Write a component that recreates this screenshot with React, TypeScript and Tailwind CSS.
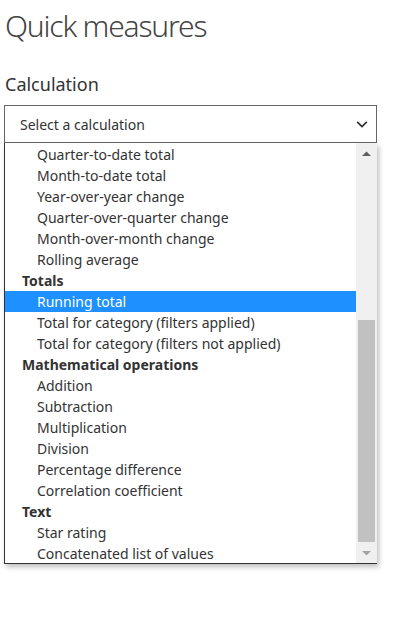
import React from 'react'

type Row = { label: string; header?: boolean; selected?: boolean }

const rows: Row[] = [
  { label: 'Quarter-to-date total' },
  { label: 'Month-to-date total' },
  { label: 'Year-over-year change' },
  { label: 'Quarter-over-quarter change' },
  { label: 'Month-over-month change' },
  { label: 'Rolling average' },
  { label: 'Totals', header: true },
  { label: 'Running total', selected: true },
  { label: 'Total for category (filters applied)' },
  { label: 'Total for category (filters not applied)' },
  { label: 'Mathematical operations', header: true },
  { label: 'Addition' },
  { label: 'Subtraction' },
  { label: 'Multiplication' },
  { label: 'Division' },
  { label: 'Percentage difference' },
  { label: 'Correlation coefficient' },
  { label: 'Text', header: true },
  { label: 'Star rating' },
  { label: 'Concatenated list of values' },
]

export default function App() {
  return (
    <div
      className="w-[400px] h-[629px] bg-white text-[#333333] overflow-hidden"
      style={{ fontFamily: '"Segoe UI", "Noto Sans", sans-serif' }}
    >
      <div className="pl-[5px] pt-[6px]">
        <h1
          className="text-[30px] font-light leading-[40px] tracking-[-1.2px] text-[#444444]"
          style={{ fontFamily: '"Segoe UI Light", "Noto Sans", sans-serif' }}
        >
          Quick measures
        </h1>
        <div className="mt-[26px] text-[18px] leading-[24px]">Calculation</div>
      </div>

      <div className="ml-[4px] mt-[9px] w-[373px]">
        {/* 选择框 */}
        <div className="h-[38px] border border-[#666666] flex items-center pl-[15px] pr-[7px]">
          <span className="flex-1 text-[14px]">Select a calculation</span>
          <svg className="w-[14px] h-[14px]" viewBox="0 0 16 16" fill="none" stroke="#333333" strokeWidth={2}>
            <path d="M2.5 5.5 8 11l5.5-5.5" />
          </svg>
        </div>

        {/* 下拉列表 */}
        <div className="flex h-[421px] border-l border-b border-[#333333] shadow-[2px_3px_5px_rgba(0,0,0,0.25)]">
          <div className="flex-1 pt-[1px]">
            {rows.map((r) => (
              <div
                key={r.label}
                className={
                  'h-[21px] flex items-center text-[14px] whitespace-nowrap ' +
                  (r.header ? 'pl-[17px] font-bold ' : 'pl-[32px] ') +
                  (r.selected ? 'bg-[#1e90ff] text-white' : '')
                }
              >
                {r.label}
              </div>
            ))}
          </div>
          {/* 滚动条 */}
          <div className="w-[21px] bg-[#f0f0f0] flex flex-col items-center">
            <div className="h-[21px] flex items-center justify-center">
              <svg className="w-[9px] h-[6px]" viewBox="0 0 9 6">
                <path d="M0 5 4.5 0.5 9 5Z" fill="#606060" />
              </svg>
            </div>
            <div className="flex-1 w-full flex flex-col px-[2px]">
              <div className="h-[156px]" />
              <div className="flex-1 bg-[#c1c1c1]" />
            </div>
            <div className="h-[21px] flex items-center justify-center">
              <svg className="w-[9px] h-[6px]" viewBox="0 0 9 6">
                <path d="M0 1 4.5 5.5 9 1Z" fill="#a3a3a3" />
              </svg>
            </div>
          </div>
        </div>
      </div>
    </div>
  )
}
